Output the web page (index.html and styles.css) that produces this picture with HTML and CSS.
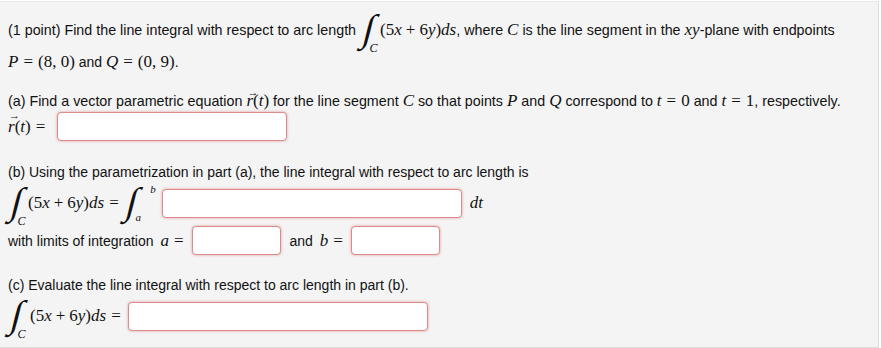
FILE: index.html
```html
<!DOCTYPE html>
<html lang="en">
<head>
  <meta charset="UTF-8" />
  <title>Line integral problem</title>
  <link rel="stylesheet" href="styles.css">
</head>
<body>
  <div class="problem">
    <!-- Statement -->
    <div class="row intro">
      <span>(1 point) Find the line integral with respect to arc length&nbsp;</span>
      <span class="int over-c">&int;</span><span class="m ig">(5<i>x</i><span class="bin">+</span>6<i>y</i>)<i>ds</i></span><span>,&nbsp;where&nbsp;</span><i class="m">C</i><span>&nbsp;is the line segment in the&nbsp;</span><i class="m">xy</i><span>-plane with endpoints</span>
    </div>
    <p class="line pts">
      <span class="m"><i>P</i><span class="rel">=</span>(8, 0)</span> and <span class="m"><i>Q</i><span class="rel">=</span>(0, 9)</span>.
    </p>

    <!-- Part a -->
    <p class="line part-a">
      (a) Find a vector parametric equation <span class="m"><i class="vec">r</i>(<i>t</i>)</span> for the line segment <i class="m">C</i> so that points <i class="m">P</i> and <i class="m">Q</i> correspond to <span class="m"><i>t</i><span class="rel">=</span>0</span> and <span class="m"><i>t</i><span class="rel">=</span>1</span>, respectively.
    </p>
    <div class="row ans-a">
      <span class="m"><i class="vec">r</i>(<i>t</i>)<span class="rel">=</span></span>
      <input class="box w-a" type="text" />
    </div>

    <!-- Part b -->
    <p class="line part-b">(b) Using the parametrization in part (a), the line integral with respect to arc length is</p>
    <div class="row ans-b">
      <span class="int over-c">&int;</span><span class="m ig">(5<i>x</i><span class="bin">+</span>6<i>y</i>)<i>ds</i><span class="rel">=</span></span>
      <span class="int lim">&int;<i class="up">b</i><i class="lo">a</i></span>
      <input class="box w-b" type="text" />
      <i class="m dt">dt</i>
    </div>
    <div class="row limits">
      <span>with limits of integration&nbsp;</span><span class="m"><i>a</i><span class="rel">=</span></span>
      <input class="box w-s" type="text" />
      <span class="and">and&nbsp;</span><span class="m"><i>b</i><span class="rel">=</span></span>
      <input class="box w-s" type="text" />
    </div>

    <!-- Part c -->
    <p class="line part-c">(c) Evaluate the line integral with respect to arc length in part (b).</p>
    <div class="row ans-c">
      <span class="int over-c">&int;</span><span class="m ig">(5<i>x</i><span class="bin">+</span>6<i>y</i>)<i>ds</i><span class="rel">=</span></span>
      <input class="box w-b" type="text" />
    </div>
  </div>
</body>
</html>
```
FILE: styles.css
```css
* {
  box-sizing: border-box;
  margin: 0;
  padding: 0;
}
body {
  background-color: #fff;
  font-family: 'Liberation Sans', Arial, sans-serif;
  font-size: 14px;
  color: #111;
}
.problem {
  width: 879px;
  height: 347px;
  margin-top: 1px;
  padding: 8px 8px 0;
  background-color: #f4f4f4;
  border-top: 1px solid #e8e8e8;
  border-right: 1px solid #dcdcdc;
  border-bottom: 1px solid #dcdcdc;
}
.row {
  display: flex;
  align-items: center;
  white-space: nowrap;
}
.line {
  white-space: nowrap;
  line-height: 18px;
}
.m {
  font-family: 'Liberation Serif', 'Times New Roman', serif;
  font-size: 17px;
}
i {
  font-style: italic;
}
.rel {
  margin: 0 5px;
}
.bin {
  margin: 0 4px;
}
.vec {
  position: relative;
}
.vec::before {
  content: '\2192';
  position: absolute;
  left: 1px;
  top: -8px;
  font-size: 11px;
  font-style: normal;
}
/* integral sign */
.int {
  position: relative;
  display: inline-block;
  width: 18px;
  height: 40px;
  font-family: 'Liberation Serif', serif;
  font-size: 38px;
  line-height: 36px;
  text-align: center;
  transform: skewX(-14deg);
}
.over-c::after {
  content: 'C';
  position: absolute;
  left: 14px;
  bottom: -4px;
  font-size: 12px;
  line-height: 12px;
  font-style: italic;
  transform: skewX(14deg);
}
.ig {
  margin-left: 2px;
}
.lim {
  width: 35px;
  margin-left: 3px;
  text-align: left;
}
.lim .up,
.lim .lo {
  position: absolute;
  font-size: 11px;
  line-height: 11px;
  transform: skewX(14deg);
}
.lim .up {
  left: 20px;
  top: 1px;
}
.lim .lo {
  left: 12px;
  bottom: 0;
}
.intro {
  height: 40px;
  font-size: 14.3px;
}
.pts {
  margin-top: 2px;
  line-height: 20px;
}
.part-a {
  margin-top: 20px;
  font-size: 14.3px;
}
.ans-a {
  height: 31px;
  margin-top: 1px;
  gap: 7px;
}
.part-b {
  margin-top: 21px;
}
.ans-b {
  height: 44px;
}
.dt {
  margin-left: 8px;
}
.limits {
  height: 31px;
  gap: 3px;
}
.limits .and {
  margin-left: 6px;
}
.part-c {
  margin-top: 20px;
}
.ans-c {
  height: 40px;
  margin-top: 2px;
  gap: 2px;
}
.box {
  height: 29px;
  background-color: #fff;
  border: 1px solid #dd8a8a;
  border-radius: 4px;
  box-shadow: 0 0 3px rgba(214, 60, 60, 0.45);
  outline: none;
}
.w-a {
  width: 230px;
}
.w-b {
  width: 300px;
}
.w-s {
  width: 89px;
}
```
